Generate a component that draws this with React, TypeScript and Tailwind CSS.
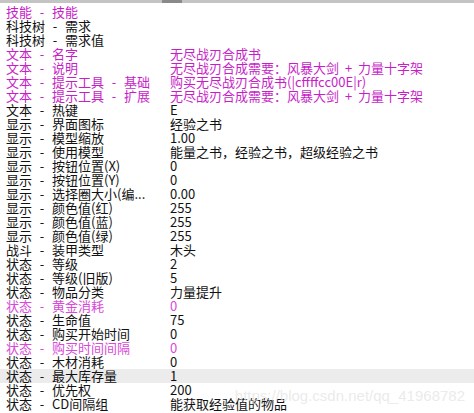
import React from 'react'

type Row = {
  cat: string
  name: string
  value?: string
  pink?: boolean
  soft?: boolean
  selected?: boolean
}

const ROWS: Row[] = [
  { cat: '技能', name: '技能', pink: true },
  { cat: '科技树', name: '需求' },
  { cat: '科技树', name: '需求值' },
  { cat: '文本', name: '名字', value: '无尽战刃合成书', pink: true },
  { cat: '文本', name: '说明', value: '无尽战刃合成需要：风暴大剑 + 力量十字架', pink: true },
  { cat: '文本', name: '提示工具 - 基础', value: '购买无尽战刃合成书(|cffffcc00E|r)', pink: true },
  { cat: '文本', name: '提示工具 - 扩展', value: '无尽战刃合成需要：风暴大剑 + 力量十字架', pink: true },
  { cat: '文本', name: '热键', value: 'E' },
  { cat: '显示', name: '界面图标', value: '经验之书' },
  { cat: '显示', name: '模型缩放', value: '1.00' },
  { cat: '显示', name: '使用模型', value: '能量之书，经验之书，超级经验之书' },
  { cat: '显示', name: '按钮位置(X)', value: '0' },
  { cat: '显示', name: '按钮位置(Y)', value: '0' },
  { cat: '显示', name: '选择圈大小(编...', value: '0.00' },
  { cat: '显示', name: '颜色值(红)', value: '255' },
  { cat: '显示', name: '颜色值(蓝)', value: '255' },
  { cat: '显示', name: '颜色值(绿)', value: '255' },
  { cat: '战斗', name: '装甲类型', value: '木头' },
  { cat: '状态', name: '等级', value: '2' },
  { cat: '状态', name: '等级(旧版)', value: '5' },
  { cat: '状态', name: '物品分类', value: '力量提升' },
  { cat: '状态', name: '黄金消耗', value: '0', soft: true },
  { cat: '状态', name: '生命值', value: '75' },
  { cat: '状态', name: '购买开始时间', value: '0' },
  { cat: '状态', name: '购买时间间隔', value: '0', soft: true },
  { cat: '状态', name: '木材消耗', value: '0' },
  { cat: '状态', name: '最大库存量', value: '1', selected: true },
  { cat: '状态', name: '优先权', value: '200' },
  { cat: '状态', name: 'CD间隔组', value: '能获取经验值的物品' },
]

// "分类 - 名称" with the fixed-width dash the editor draws
const Label = ({ row }: { row: Row }) => {
  const parts = `${row.cat} - ${row.name}`.split(' - ')
  return (
    <span className="flex items-center whitespace-nowrap">
      {parts.map((p, i) => (
        <React.Fragment key={i}>
          {i > 0 && <span className="inline-block w-[20px] text-center">-</span>}
          <span>{p}</span>
        </React.Fragment>
      ))}
    </span>
  )
}

export default function App() {
  return (
    <div className="relative w-[474px] h-[413px] overflow-hidden bg-white font-['Noto_Sans_CJK_SC',sans-serif] text-[13px] leading-[14px] text-[#111]">
      <div className="flex h-[3px] bg-[#c4c4c4]">
        <div className="w-[162px]" />
        <div className="w-[20px] bg-[#8a8a8a]" />
      </div>
      <div className="flex flex-col pt-[2px]">
        {ROWS.map((row, i) => {
          const color = row.pink ? 'text-[#c81ec8]' : row.soft ? 'text-[#d84ad8]' : 'text-[#111]'
          return (
            <div key={i} className={'flex h-[14px] items-center ' + (row.selected ? 'bg-[#ececec] ' : '') + color}>
              <div className="w-[170px] pl-[6px]">
                <Label row={row} />
              </div>
              <div className="whitespace-nowrap [word-spacing:3px]">{row.value ?? ''}</div>
            </div>
          )
        })}
      </div>
      <div className="absolute right-[9px] bottom-[9px] font-['Liberation_Sans',sans-serif] text-[15px] leading-[16px] text-[#e2e2e2]/70">
        https://blog.csdn.net/qq_41968782
      </div>
    </div>
  )
}
